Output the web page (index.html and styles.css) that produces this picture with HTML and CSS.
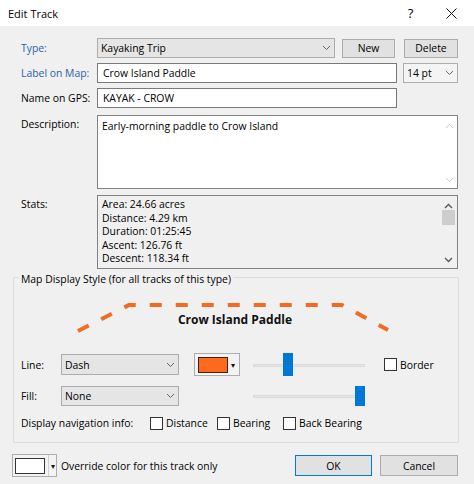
FILE: index.html
```html
<!DOCTYPE html>
<html lang="en">
<head>
    <meta charset="UTF-8">
    <meta name="viewport" content="width=device-width, initial-scale=1.0">
    <title>Edit Track</title>
    <link rel="stylesheet" href="styles.css">
</head>
<body>
<div class="dialog">
    <div class="titlebar">
        <span class="title">Edit Track</span>
        <span class="tb-btn">?</span>
        <span class="tb-btn">
            <svg width="11" height="11" viewBox="0 0 11 11"><path d="M0.5 0.5 L10.5 10.5 M10.5 0.5 L0.5 10.5" stroke="#111" stroke-width="1" fill="none"/></svg>
        </span>
    </div>

    <div class="content">
        <div class="row row-type">
            <span class="lbl link">Type:</span>
            <div class="combo type-combo">
                <span class="combo-text">Kayaking Trip</span>
                <svg class="chev" width="9" height="6" viewBox="0 0 9 6"><path d="M1 1 L4.5 4.5 L8 1" stroke="#666" fill="none"/></svg>
            </div>
            <button class="btn new-btn">New</button>
            <button class="btn delete-btn">Delete</button>
        </div>

        <div class="row row-field">
            <span class="lbl link">Label on Map:</span>
            <div class="input wide-input">Crow Island Paddle</div>
            <div class="combo size-combo">
                <span class="combo-text">14 pt</span>
                <svg class="chev" width="9" height="6" viewBox="0 0 9 6"><path d="M1 1 L4.5 4.5 L8 1" stroke="#666" fill="none"/></svg>
            </div>
        </div>

        <div class="row row-field">
            <span class="lbl">Name on GPS:</span>
            <div class="input wide-input">KAYAK - CROW</div>
        </div>

        <div class="row row-desc">
            <span class="lbl lbl-top">Description:</span>
            <div class="memo desc-memo">
                <div class="memo-text">Early-morning paddle to Crow Island</div>
                <div class="vscroll">
                    <svg width="9" height="6" viewBox="0 0 9 6"><path d="M1 5 L4.5 1.5 L8 5" stroke="#c8c8c8" fill="none"/></svg>
                    <svg width="9" height="6" viewBox="0 0 9 6"><path d="M1 1 L4.5 4.5 L8 1" stroke="#c8c8c8" fill="none"/></svg>
                </div>
            </div>
        </div>

        <div class="row row-stats">
            <span class="lbl lbl-top stats-lbl">Stats:</span>
            <div class="memo stats-memo">
                <div class="memo-text stats-text">
                    <div>Area: 24.66 acres</div>
                    <div>Distance: 4.29 km</div>
                    <div>Duration: 01:25:45</div>
                    <div>Ascent: 126.76 ft</div>
                    <div>Descent: 118.34 ft</div>
                </div>
                <div class="vscroll stats-scroll">
                    <svg width="9" height="6" viewBox="0 0 9 6"><path d="M1 5 L4.5 1.5 L8 5" stroke="#555" stroke-width="1.3" fill="none"/></svg>
                    <div class="scroll-thumb"></div>
                    <div class="scroll-space"></div>
                    <svg width="9" height="6" viewBox="0 0 9 6"><path d="M1 1 L4.5 4.5 L8 1" stroke="#555" stroke-width="1.3" fill="none"/></svg>
                </div>
            </div>
        </div>

        <div class="group">
            <div class="legend">Map Display Style (for all tracks of this type)</div>

            <svg class="preview" width="444" height="58" viewBox="0 2 444 58">
                <path d="M64 46 L115 20 L328 20 L374 45" fill="none" stroke="#f26b21" stroke-width="4" stroke-dasharray="12 14" stroke-dashoffset="0"/>
                <text x="221" y="39" text-anchor="middle" class="preview-label">Crow Island Paddle</text>
            </svg>

            <div class="grow line-row">
                <span class="glbl">Line:</span>
                <div class="combo style-combo">
                    <span class="combo-text">Dash</span>
                    <svg class="chev" width="9" height="6" viewBox="0 0 9 6"><path d="M1 1 L4.5 4.5 L8 1" stroke="#666" fill="none"/></svg>
                </div>
                <div class="colorbtn line-color">
                    <span class="swatch orange"></span>
                    <span class="drop">&#9662;</span>
                </div>
                <div class="slider">
                    <div class="track"></div>
                    <div class="thumb" style="left: 30px"></div>
                </div>
                <label class="check border-check"><span class="box"></span>Border</label>
            </div>

            <div class="grow fill-row">
                <span class="glbl">Fill:</span>
                <div class="combo style-combo fill-combo">
                    <span class="combo-text">None</span>
                    <svg class="chev" width="9" height="6" viewBox="0 0 9 6"><path d="M1 1 L4.5 4.5 L8 1" stroke="#666" fill="none"/></svg>
                </div>
                <div class="slider fill-slider">
                    <div class="track"></div>
                    <div class="thumb" style="left: 102px"></div>
                </div>
            </div>

            <div class="grow nav-row">
                <span class="nav-lbl">Display navigation info:</span>
                <label class="check nav-dist"><span class="box"></span>Distance</label>
                <label class="check nav-bear"><span class="box"></span>Bearing</label>
                <label class="check"><span class="box"></span>Back Bearing</label>
            </div>
        </div>

        <div class="footer">
            <div class="colorbtn override-color">
                <span class="swatch white"></span>
                <span class="sep"></span>
                <span class="drop">&#9662;</span>
            </div>
            <span class="override-lbl">Override color for this track only</span>
            <button class="btn ok-btn">OK</button>
            <button class="btn cancel-btn">Cancel</button>
        </div>
    </div>
</div>
</body>
</html>
```

FILE: styles.css
```css
* {
    box-sizing: border-box;
}
body {
    margin: 0;
    background-color: #f0f0f0;
    font-family: "Open Sans", "Noto Sans", sans-serif;
    font-size: 10.4px;
    color: #000;
}
.dialog {
    width: 474px;
    height: 484px;
    background-color: #f0f0f0;
    overflow: hidden;
}

/* title bar */
.titlebar {
    height: 26px;
    background-color: #fff;
    display: flex;
    align-items: center;
    padding-left: 8px;
    padding-right: 2px;
}
.title {
    flex: 1;
    font-size: 11px;
}
.tb-btn {
    width: 41px;
    display: flex;
    justify-content: center;
    align-items: center;
    font-size: 13px;
}

/* top form */
.content {
    padding-top: 12px;
}
.row {
    display: flex;
    align-items: center;
    padding-left: 21px;
}
.row-type {
    height: 20px;
}
.row-field {
    height: 20px;
    margin-top: 5px;
}
.row-desc {
    align-items: flex-start;
    margin-top: 7px;
}
.row-stats {
    align-items: flex-start;
    margin-top: 6px;
}
.lbl {
    width: 76px;
    flex-shrink: 0;
}
.lbl-top {
    padding-top: 2px;
}
.link {
    color: #2b63a5;
}

.combo {
    height: 20px;
    display: flex;
    align-items: center;
    justify-content: space-between;
    padding: 0 3px 0 3px;
    background-color: #e5e5e5;
    border: 1px solid #adadad;
}
.type-combo {
    width: 238px;
}
.size-combo {
    width: 55px;
    margin-left: 6px;
    background-color: #f4f4f4;
}
.btn {
    height: 19px;
    padding: 0;
    font-family: inherit;
    font-size: 10.4px;
    background-color: #e1e1e1;
    border: 1px solid #adadad;
    color: #000;
}
.new-btn {
    width: 53px;
    margin-left: 7px;
}
.delete-btn {
    width: 54px;
    margin-left: 9px;
}
.input {
    height: 20px;
    line-height: 18px;
    padding-left: 5px;
    background-color: #fff;
    border: 1px solid #7a7a7a;
}
.wide-input {
    width: 300px;
}

.memo {
    display: flex;
    width: 361px;
    height: 74px;
    border: 1px solid #828282;
    background-color: #fff;
}
.memo-text {
    flex: 1;
    padding: 3px 0 0 4px;
    line-height: 14px;
}
.vscroll {
    width: 15px;
    display: flex;
    flex-direction: column;
    justify-content: space-between;
    align-items: center;
    padding: 7px 0 5px;
}
.stats-memo {
    background-color: #f0f0f0;
}
.stats-text {
    line-height: 13.6px;
    padding-top: 2px;
}
.stats-scroll {
    justify-content: flex-start;
    margin-right: 1px;
}
.scroll-thumb {
    width: 13px;
    height: 15px;
    margin-top: 1px;
    background-color: #cdcdcd;
}
.scroll-space {
    flex: 1;
}

/* map display style group */
.group {
    margin: 8px 0 0 13px;
    width: 446px;
    border: 1px solid #dcdcdc;
    padding-bottom: 11px;
}
.legend {
    width: max-content;
    margin: -6px 0 0 5px;
    padding: 0 2px;
    line-height: 15px;
    background-color: #f0f0f0;
}
.preview {
    display: block;
}
.preview-label {
    font-family: "Open Sans", "Noto Sans", sans-serif;
    font-weight: bold;
    font-size: 12px;
    fill: #111;
}
.grow {
    display: flex;
    align-items: center;
    padding-left: 7px;
}
.line-row {
    height: 23px;
    margin-top: 8px;
}
.fill-row {
    height: 20px;
    margin-top: 10px;
}
.nav-row {
    height: 16px;
    margin-top: 9px;
}
.glbl {
    width: 40px;
}
.style-combo {
    width: 118px;
    height: 21px;
}
.fill-combo {
    height: 20px;
}

.colorbtn {
    display: flex;
    align-items: center;
    height: 23px;
    border: 1px solid #adadad;
    background-color: #f3f3f3;
}
.line-color {
    width: 46px;
    margin-left: 15px;
}
.swatch {
    width: 30px;
    height: 16px;
    margin-left: 3px;
    border: 1px solid #3b2414;
}
.orange {
    background-color: #ff6a1e;
}
.white {
    background-color: #fff;
    border-color: #333;
}
.drop {
    font-size: 8px;
    margin-left: 3px;
    color: #111;
}

.slider {
    position: relative;
    width: 112px;
    height: 23px;
    margin-left: 13px;
}
.fill-slider {
    margin-left: 74px;
    height: 20px;
}
.track {
    position: absolute;
    left: 0;
    right: 0;
    top: 50%;
    height: 3px;
    margin-top: -1px;
    background-color: #e7e7e7;
    border: 1px solid #dadada;
}
.thumb {
    position: absolute;
    top: 0;
    width: 10px;
    height: 100%;
    background-color: #0078d7;
}

.check {
    display: flex;
    align-items: center;
}
.box {
    width: 13px;
    height: 13px;
    margin-right: 3px;
    border: 1px solid #333;
    background-color: #fff;
}
.border-check {
    margin-left: 19px;
}
.nav-lbl {
    width: 129px;
}
.nav-dist {
    width: 67px;
}
.nav-bear {
    width: 66px;
}

/* bottom row */
.footer {
    display: flex;
    align-items: center;
    height: 23px;
    margin-top: 11px;
    padding-left: 12px;
}
.override-color {
    width: 45px;
}
.override-color .swatch {
    margin-left: 2px;
}
.sep {
    width: 1px;
    height: 21px;
    margin-left: 3px;
    background-color: #d0d0d0;
}
.override-color .drop {
    margin-left: 2px;
}
.override-lbl {
    margin-left: 4px;
    width: 234px;
}
.ok-btn {
    width: 77px;
    height: 21px;
    border-color: #0078d7;
}
.cancel-btn {
    width: 78px;
    height: 21px;
    margin-left: 8px;
}
```
